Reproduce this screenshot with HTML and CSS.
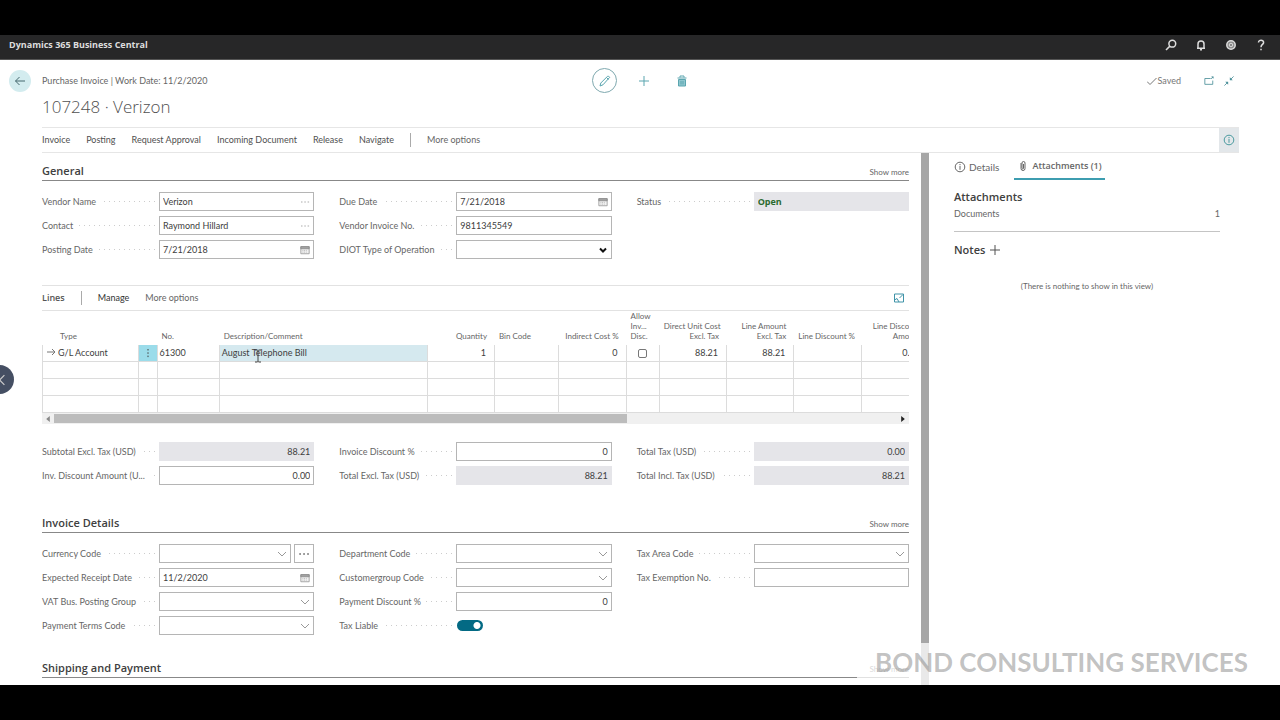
FILE: index.html
```html
<!DOCTYPE html>
<html lang="en">
<head>
  <meta charset="UTF-8" />
  <meta name="viewport" content="width=device-width, initial-scale=1" />
  <title>107248 · Verizon - Dynamics 365 Business Central</title>
  <link rel="stylesheet" href="styles.css">
</head>
<body>
  <svg class="sprite" aria-hidden="true">
    <symbol id="i-cal" viewBox="0 0 12 12"><path d="M1 2h10v8.500H1z" fill="#f2f2f2" stroke="#999"/><path d="M1 2h10v2.500H1z" fill="#a5a5a5" stroke="#8a8a8a"/><path d="M3 6.500h6M3 8.500h6" stroke="#aaa" stroke-dasharray="1 1"/></symbol>
    <symbol id="i-chev" viewBox="0 0 10 10"><path d="M1 3l4 4 4-4" fill="none" stroke="#999"/></symbol>
    <symbol id="i-dots" viewBox="0 0 10 10"><path d="M1 5h1.500M4.300 5h1.500M7.600 5h1.500" stroke="#777" stroke-width="1.200"/></symbol>
    <symbol id="i-info" viewBox="0 0 12 12"><circle cx="6" cy="6" r="4.800" fill="none" stroke="currentColor"/><path d="M6 5v3.800M6 3v1.200" stroke="currentColor"/></symbol>
  </svg>

  <div class="app">
    <header class="topbar">
      <span class="brand">Dynamics 365 Business Central</span>
      <nav class="top-icons">
        <button aria-label="Search"><svg viewBox="0 0 12 12"><circle cx="7.300" cy="4.700" r="3.400"/><path d="M4.900 7.100L1 11"/></svg></button>
        <button aria-label="Notifications"><svg viewBox="0 0 12 12"><path d="M3 9V5a3 3 0 0 1 6 0v4M2 9.200h8M5 10.700h2"/></svg></button>
        <button aria-label="Settings"><svg viewBox="0 0 12 12"><circle cx="6" cy="6" r="4.200" fill="#888"/><circle cx="6" cy="6" r="1.800" stroke-width="1"/></svg></button>
        <button aria-label="Help"><svg viewBox="0 0 12 12"><path d="M3.500 3.600C3.500 .3 8.800 .5 8.600 3.600 8.500 5.400 6 5.600 6 8.200M6 9.800v1.500"/></svg></button>
      </nav>
    </header>

    <div class="page-head">
      <div class="crumbs">
        <button class="back" aria-label="Back"><svg viewBox="0 0 12 12"><path d="M11 6H1.500M5.500 2l-4 4 4 4"/></svg></button>
        <span>Purchase Invoice | Work Date: 11/2/2020</span>
      </div>
      <div class="head-actions">
        <button class="edit" aria-label="Edit"><svg viewBox="0 0 12 12"><path d="M1 11l.8-3L8.500 1.300q1.200-.6 2.200 1L4 9.800z"/><path d="M7.500 2.500l2 2"/></svg></button>
        <button aria-label="New"><svg viewBox="0 0 12 12"><path d="M6 1v10M1 6h10"/></svg></button>
        <button aria-label="Delete"><svg viewBox="0 0 12 12"><path d="M1.500 3h9M4 2.500V1h4v1.500" /><path d="M2.500 4.500h7V11h-7z" fill="#8fc7cf"/><path d="M5 6v3.500M7 6v3.500"/></svg></button>
      </div>
      <div class="head-right">
        <span class="saved"><svg viewBox="0 0 10 10"><path d="M0 5.500l3 3L9.500 2"/></svg>Saved</span>
        <button aria-label="Open in new window"><svg viewBox="0 0 12 12"><path d="M8 3H1v7h9.500V5.500M8.500 3.500L11 1M9 1h2v2"/></svg></button>
        <button aria-label="Collapse"><svg viewBox="0 0 12 12"><path d="M11.500 .5L7.500 4.500M.5 11.500L4.500 7.500"/><path d="M7 1.500V5h3.500zM1.500 7H5v3.500z" fill="currentColor" stroke="none"/></svg></button>
      </div>
      <h1>107248 · Verizon</h1>
    </div>

    <nav class="actionbar">
      <a href="#">Invoice</a>
      <a href="#">Posting</a>
      <a href="#">Request Approval</a>
      <a href="#">Incoming Document</a>
      <a href="#">Release</a>
      <a href="#">Navigate</a>
      <a href="#" class="more">More options</a>
      <button class="info" aria-label="Toggle details"><svg><use href="#i-info"/></svg></button>
    </nav>

    <div class="content">
      <main>
        <div class="section-head"><h2>General</h2><a href="#">Show more</a></div>
        <div class="fields">
          <div class="col">
            <div class="row"><label for="vendor">Vendor Name</label><div class="box"><input id="vendor" value="Verizon"><svg class="faint"><use href="#i-dots"/></svg></div></div>
            <div class="row"><label for="contact">Contact</label><div class="box"><input id="contact" value="Raymond Hillard"><svg class="faint"><use href="#i-dots"/></svg></div></div>
            <div class="row"><label for="posting">Posting Date</label><div class="box"><input id="posting" value="7/21/2018"><svg><use href="#i-cal"/></svg></div></div>
          </div>
          <div class="col">
            <div class="row"><label for="due">Due Date</label><div class="box"><input id="due" value="7/21/2018"><svg><use href="#i-cal"/></svg></div></div>
            <div class="row"><label for="vinv">Vendor Invoice No.</label><div class="box"><input id="vinv" value="9811345549"></div></div>
            <div class="row"><label for="diot">DIOT Type of Operation</label><div class="box native"><select id="diot"><option></option></select><svg viewBox="0 0 10 10"><path d="M2 3.500l3 3 3-3"/></svg></div></div>
          </div>
          <div class="col">
            <div class="row"><label for="status">Status</label><div class="box readonly status"><input id="status" value="Open" readonly></div></div>
          </div>
        </div>

        <div class="lines-bar">
          <h2>Lines</h2>
          <a href="#" class="manage">Manage</a>
          <a href="#">More options</a>
          <button aria-label="Expand lines"><svg viewBox="0 0 12 12"><path d="M1.500 2h9v8h-9zM6.500 6L10 2.500M1.500 8L4 6.500 6 10"/></svg></button>
        </div>
        <div class="grid-wrap">
          <table>
            <colgroup>
              <col class="c-type"><col class="c-menu"><col class="c-no"><col class="c-desc"><col class="c-num"><col class="c-bin"><col class="c-num"><col class="c-check"><col class="c-num"><col class="c-num"><col class="c-num"><col class="c-num">
            </colgroup>
            <thead>
              <tr>
                <th class="type">Type</th><th></th><th>No.</th><th>Description/Comment</th><th class="num">Quantity</th><th>Bin Code</th><th class="num">Indirect Cost %</th><th>Allow<br>Inv...<br>Disc.</th><th class="num">Direct Unit Cost<br>Excl. Tax</th><th class="num">Line Amount<br>Excl. Tax</th><th class="num">Line Discount %</th><th class="num">Line Discount<br>Amount</th>
              </tr>
            </thead>
            <tbody>
              <tr class="current">
                <td class="type"><svg viewBox="0 0 10 10"><path d="M1 5h8M6 2l3 3-3 3"/></svg>G/L Account</td>
                <td class="menu"><svg viewBox="0 0 4 10"><path d="M2 1v1.500M2 4.300v1.500M2 7.600v1.500"/></svg></td>
                <td>61300</td>
                <td class="active">August Telephone Bill<svg class="ibeam" viewBox="0 0 8 14"><path d="M1 1h2.500l.5 .5.5-.5H7M4 1.500v11M1 13h2.500l.5-.5.5.5H7"/></svg></td>
                <td class="num">1</td><td></td><td class="num">0</td>
                <td class="check"><input type="checkbox" aria-label="Allow invoice discount"></td>
                <td class="num">88.21</td><td class="num">88.21</td><td></td><td class="num">0.00</td>
              </tr>
              <tr><td></td><td></td><td></td><td></td><td></td><td></td><td></td><td></td><td></td><td></td><td></td><td></td></tr>
              <tr><td></td><td></td><td></td><td></td><td></td><td></td><td></td><td></td><td></td><td></td><td></td><td></td></tr>
              <tr><td></td><td></td><td></td><td></td><td></td><td></td><td></td><td></td><td></td><td></td><td></td><td></td></tr>
            </tbody>
          </table>
        </div>
        <div class="hscroll">
          <svg viewBox="0 0 10 10"><path d="M6.500 2.500v5L3.500 5z" fill="#888"/></svg>
          <div class="track"><div class="thumb"></div></div>
          <svg viewBox="0 0 10 10"><path d="M3.500 2.500v5L6.500 5z" fill="#222"/></svg>
        </div>

        <div class="fields totals">
          <div class="col">
            <div class="row"><label for="sub">Subtotal Excl. Tax (USD)</label><div class="box readonly amount"><input id="sub" value="88.21" readonly></div></div>
            <div class="row"><label for="invdisc">Inv. Discount Amount (U...</label><div class="box amount"><input id="invdisc" value="0.00"></div></div>
          </div>
          <div class="col">
            <div class="row"><label for="discpct">Invoice Discount %</label><div class="box amount"><input id="discpct" value="0"></div></div>
            <div class="row"><label for="totex">Total Excl. Tax (USD)</label><div class="box readonly amount"><input id="totex" value="88.21" readonly></div></div>
          </div>
          <div class="col">
            <div class="row"><label for="tottax">Total Tax (USD)</label><div class="box readonly amount"><input id="tottax" value="0.00" readonly></div></div>
            <div class="row"><label for="totin">Total Incl. Tax (USD)</label><div class="box readonly amount"><input id="totin" value="88.21" readonly></div></div>
          </div>
        </div>

        <div class="section-head details"><h2>Invoice Details</h2><a href="#">Show more</a></div>
        <div class="fields">
          <div class="col">
            <div class="row"><label for="currency">Currency Code</label><div class="box"><select id="currency"><option></option></select><svg><use href="#i-chev"/></svg></div><button class="assist" aria-label="Exchange rate"><svg><use href="#i-dots"/></svg></button></div>
            <div class="row"><label for="receipt">Expected Receipt Date</label><div class="box"><input id="receipt" value="11/2/2020"><svg><use href="#i-cal"/></svg></div></div>
            <div class="row"><label for="vat">VAT Bus. Posting Group</label><div class="box"><select id="vat"><option></option></select><svg><use href="#i-chev"/></svg></div></div>
            <div class="row"><label for="terms">Payment Terms Code</label><div class="box"><select id="terms"><option></option></select><svg><use href="#i-chev"/></svg></div></div>
          </div>
          <div class="col">
            <div class="row"><label for="dept">Department Code</label><div class="box"><select id="dept"><option></option></select><svg><use href="#i-chev"/></svg></div></div>
            <div class="row"><label for="custgrp">Customergroup Code</label><div class="box"><select id="custgrp"><option></option></select><svg><use href="#i-chev"/></svg></div></div>
            <div class="row"><label for="paydisc">Payment Discount %</label><div class="box amount"><input id="paydisc" value="0"></div></div>
            <div class="row"><label for="liable">Tax Liable</label><div class="switch"><input id="liable" type="checkbox" checked></div></div>
          </div>
          <div class="col">
            <div class="row"><label for="area">Tax Area Code</label><div class="box"><select id="area"><option></option></select><svg><use href="#i-chev"/></svg></div></div>
            <div class="row"><label for="exempt">Tax Exemption No.</label><div class="box"><input id="exempt"></div></div>
          </div>
        </div>

        <div class="section-head shipping"><h2>Shipping and Payment</h2><a href="#">Show more</a></div>
      </main>

      <div class="vscroll"></div>

      <aside>
        <nav class="tabs">
          <a href="#"><svg><use href="#i-info"/></svg>Details</a>
          <a href="#" class="selected"><svg viewBox="0 0 8 12"><path d="M2 3v5.500a2 2 0 0 0 4 0V3a1.500 1.500 0 0 0-3 0v5.500a1 1 0 0 0 1.500 0V4"/></svg>Attachments (1)</a>
        </nav>
        <h2>Attachments</h2>
        <div class="documents"><span>Documents</span><a href="#">1</a></div>
        <div class="notes">
          <h2>Notes</h2>
          <button aria-label="Add note"><svg viewBox="0 0 12 12"><path d="M6 1v10M1 6h10"/></svg></button>
        </div>
        <p class="empty">(There is nothing to show in this view)</p>
      </aside>
    </div>

    <button class="prev" aria-label="Previous"><svg viewBox="0 0 10 10"><path d="M7 1L3 5l4 4"/></svg></button>
    <div class="watermark">BOND CONSULTING SERVICES</div>
  </div>
</body>
</html>
```

FILE: styles.css
```css
* {
  box-sizing: border-box;
}
body {
  margin: 0;
  padding: 35px 0;
  background: #000;
  color: #505050;
  font-family: Lato, "Open Sans", sans-serif;
  font-size: 9px;
  line-height: 16px;
}
a {
  color: inherit;
  text-decoration: none;
}
button {
  display: flex;
  align-items: center;
  justify-content: center;
  padding: 0;
  border: none;
  background: none;
  color: inherit;
}
svg {
  flex: none;
  width: 12px;
  height: 12px;
  fill: none;
  stroke: currentColor;
}
.sprite {
  position: absolute;
  width: 0;
  height: 0;
}
h1, h2 {
  margin: 0;
  font-family: "Open Sans", sans-serif;
}
h2 {
  font-size: 11px;
  font-weight: 600;
  line-height: 18px;
  color: #404040;
}
.app {
  position: relative;
  display: flex;
  flex-direction: column;
  height: calc(100vh - 70px);
  background: #fff;
  overflow: hidden;
}

/* top bar */
.topbar {
  display: flex;
  flex: none;
  align-items: center;
  justify-content: space-between;
  height: 25px;
  padding: 0 13px 4px 9px;
  background: #272728;
  border-bottom: 1px solid #555;
  color: #ddd;
}
.brand {
  font-family: "Open Sans", sans-serif;
  font-weight: 700;
}
.top-icons {
  display: flex;
  gap: 18px;
}
.top-icons svg {
  stroke-width: 1.5;
}

/* page header */
.page-head {
  display: grid;
  flex: none;
  grid-template-columns: 1fr auto 1fr;
  align-items: center;
  padding: 8px 9px 6px;
}
.crumbs {
  display: flex;
  align-items: center;
  gap: 11px;
  color: #666;
}
.back {
  width: 22px;
  height: 22px;
  border-radius: 50%;
  background: #d3ecef;
  color: #45686e;
}
.head-actions {
  display: flex;
  align-items: center;
  gap: 26px;
  color: #5aa5af;
}
.edit {
  width: 25px;
  height: 25px;
  border: 1px solid #7fa9af;
  border-radius: 50%;
}
.head-actions button:nth-child(2) {
  margin-left: -5px;
}
.head-right {
  display: flex;
  align-items: center;
  justify-content: flex-end;
  gap: 10px;
  padding-right: 37px;
  color: #4a8f99;
}
.saved {
  display: flex;
  align-items: center;
  margin-right: 13px;
  color: #777;
}
.head-right svg {
  width: 10px;
  height: 10px;
}
h1 {
  grid-column: 1 / -1;
  padding-left: 33px;
  font-size: 17px;
  font-weight: 300;
  line-height: 28px;
  color: #505050;
}

/* action bar */
.actionbar {
  display: flex;
  flex: none;
  align-items: center;
  gap: 16px;
  height: 26px;
  margin: 0 41px 0 42px;
  border: solid #e6e6e6;
  border-width: 1px 0;
}
.more {
  padding-left: 16px;
  border-left: 1px solid #aaa;
  line-height: 14px;
  color: #666;
}
.info {
  width: 20px;
  height: 24px;
  margin-left: auto;
  background: #e3e7ea;
  color: #4a9a9f;
}

/* content */
.content {
  display: flex;
  flex: 1;
  min-height: 0;
}
main {
  flex: 1;
  min-width: 0;
  padding: 0 12px 0 42px;
}
.section-head {
  display: flex;
  align-items: flex-end;
  justify-content: space-between;
  height: 28px;
  margin-bottom: 11px;
  border-bottom: 1px solid #888;
}
.section-head a {
  font-size: 8px;
  color: #666;
}
.fields {
  display: grid;
  grid-template-columns: repeat(3, 1fr);
  gap: 25px;
}
.col {
  display: flex;
  flex-direction: column;
  gap: 5px;
}
.row {
  display: flex;
  height: 19px;
}
.row label {
  display: flex;
  align-items: center;
  width: 117px;
  padding-right: 4px;
  white-space: nowrap;
  color: #666;
}
.row label::after {
  content: "";
  flex: 1;
  height: 1px;
  margin-left: 5px;
  background: repeating-linear-gradient(to left, #ccc 0 1px, transparent 1px 5px);
}
.box {
  display: flex;
  flex: 1;
  align-items: center;
  min-width: 0;
  padding-right: 3px;
  border: 1px solid #b5b5b5;
}
.box input,
.box select {
  flex: 1;
  min-width: 0;
  height: 17px;
  padding: 0 3px;
  border: none;
  outline: none;
  background: none;
  font: inherit;
  color: #404040;
  appearance: none;
}
.box svg {
  width: 10px;
  height: 10px;
}
.faint {
  opacity: 0.6;
}
.native svg {
  color: #111;
  stroke-width: 2;
}
.readonly {
  border-color: #e5e5e9;
  background: #e5e5e9;
}
.status input {
  font-family: "Open Sans", sans-serif;
  font-weight: 700;
  color: #2b6b2f;
}
.amount {
  padding-right: 0;
}
.amount input {
  text-align: right;
}
.assist {
  width: 20px;
  margin-left: 3px;
  border: 1px solid #b5b5b5;
}
.switch {
  display: flex;
  align-items: center;
  padding-left: 1px;
}
.switch input {
  width: 26px;
  height: 11px;
  margin: 0;
  border-radius: 6px;
  background: radial-gradient(circle at 20px 50%, #fff 0 3px, transparent 4px) #036a84;
  appearance: none;
}

/* lines */
.lines-bar {
  display: flex;
  align-items: center;
  height: 26px;
  margin-top: 26px;
  border: solid #e2e2e2;
  border-width: 1px 0;
}
.lines-bar h2 {
  padding-right: 16px;
  border-right: 1px solid #aaa;
  font-size: 9px;
  line-height: 14px;
  color: #555;
}
.lines-bar a {
  margin-left: 16px;
  color: #666;
}
.lines-bar .manage {
  color: #333;
}
.lines-bar button {
  margin-left: auto;
  margin-right: 4px;
  color: #3f93a8;
}
.grid-wrap {
  overflow: hidden;
}
table {
  width: 887px;
  table-layout: fixed;
  border-collapse: separate;
  border-spacing: 0;
}
.c-type { width: 97px; }
.c-menu { width: 18px; }
.c-no { width: 62px; }
.c-desc { width: 207px; }
.c-num { width: 67px; }
.c-bin { width: 64px; }
.c-check { width: 33px; }
th {
  height: 34px;
  padding: 0 4px 4px;
  vertical-align: bottom;
  text-align: left;
  font-size: 8px;
  font-weight: 400;
  line-height: 10px;
  white-space: nowrap;
  color: #666;
}
td {
  position: relative;
  height: 17px;
  padding: 0 2px;
  border: solid #dcdcdc;
  border-width: 0 1px 1px 0;
  line-height: 16px;
  white-space: nowrap;
  color: #404040;
}
td:first-child {
  border-left-width: 1px;
}
th.num,
td.num {
  padding-right: 8px;
  text-align: right;
}
th.type {
  padding-left: 18px;
}
td.type svg {
  width: 10px;
  height: 10px;
  margin: 0 2px 0 1px;
  vertical-align: -1px;
  color: #777;
}
td.menu {
  background: #9bdcea;
  line-height: 0;
  text-align: center;
}
td.menu svg {
  width: 4px;
  height: 10px;
}
td.active {
  background: #d5e9ef;
}
td.check {
  line-height: 0;
  text-align: center;
}
td.check input {
  width: 9px;
  height: 9px;
  margin: 0;
  border: 1px solid #777;
  border-radius: 2px;
  appearance: none;
}
.ibeam {
  position: absolute;
  left: 34px;
  top: 4px;
  width: 8px;
  height: 14px;
}
.hscroll {
  display: flex;
  align-items: center;
  height: 11px;
  background: #f0f0f0;
}
.track {
  flex: 1;
}
.thumb {
  width: 68%;
  height: 9px;
  background: #bcbcbc;
}
.hscroll svg {
  stroke: none;
}
.totals {
  margin-top: 18px;
}
.details {
  margin-top: 20px;
}
.shipping {
  margin-top: 15px;
}

/* side pane */
.vscroll {
  width: 8px;
  background: #a6a6a6;
}
aside {
  width: 351px;
  padding: 0 60px 0 25px;
}
.tabs {
  display: flex;
  gap: 15px;
  margin-bottom: 8px;
}
.tabs a {
  display: flex;
  align-items: center;
  gap: 3px;
  height: 27px;
  color: #666;
}
.tabs a:first-child {
  font-size: 10px;
}
.tabs .selected {
  padding: 0 3px;
  border-bottom: 2px solid #3d9db0;
  font-family: "Open Sans", sans-serif;
  font-weight: 600;
}
.documents {
  display: flex;
  justify-content: space-between;
  padding-bottom: 9px;
  border-bottom: 1px solid #c4c4c4;
  color: #666;
}
.notes {
  display: flex;
  align-items: center;
  gap: 4px;
  margin-top: 9px;
}
.empty {
  margin: 19px 0 0;
  text-align: center;
  font-size: 8px;
  color: #666;
}

/* overlays */
.prev {
  position: absolute;
  left: -15px;
  top: 330px;
  width: 29px;
  height: 29px;
  padding-left: 4px;
  border-radius: 50%;
  background: #454f63;
  color: #ccc;
}
.watermark {
  position: absolute;
  right: 0;
  bottom: 0;
  padding: 0 32px 4px 18px;
  background: rgba(255, 255, 255, 0.75);
  font-size: 26px;
  font-weight: 700;
  line-height: 38px;
  color: rgba(120, 120, 120, 0.45);
}
```
